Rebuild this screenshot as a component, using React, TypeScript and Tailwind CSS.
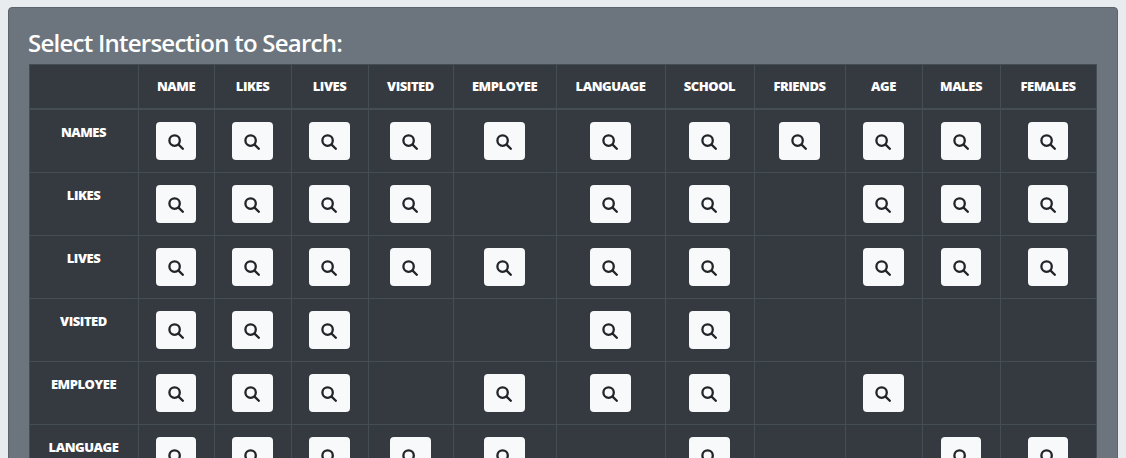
import React from "react";

const cols = ["NAME", "LIKES", "LIVES", "VISITED", "EMPLOYEE", "LANGUAGE", "SCHOOL", "FRIENDS", "AGE", "MALES", "FEMALES"];
const widths = [109, 76, 77, 77, 85, 103, 109, 89, 91, 77, 78, 96];
const rows: [string, string][] = [
  ["NAMES", "11111111111"],
  ["LIKES", "11110110111"],
  ["LIVES", "11111110111"],
  ["VISITED", "11100110000"],
  ["EMPLOYEE", "11101110100"],
  ["LANGUAGE", "11111010011"],
];

function SearchIcon() {
  return (
    <svg width="16" height="16" viewBox="0 0 16 16" fill="none" stroke="#212529" strokeWidth="2.3" className="relative top-[1px] -left-[0.5px] block">
      <circle cx="6.6" cy="6.6" r="5.2" />
      <path d="M10.6 10.6 L14.8 14.8" strokeLinecap="round" />
    </svg>
  );
}

export default function App() {
  return (
    <div className="h-[458px] overflow-hidden bg-[#e9ecef] pl-2 pr-2 pt-[7px] font-['Open_Sans','Noto_Sans',sans-serif]">
      <div className="rounded border border-[#5c646b] bg-[#6c757d] px-5 pt-[18px]">
        <h2 className="mb-[5px] -ml-[1px] h-[33px] text-[24px] leading-[33px] font-semibold tracking-[-0.75px] text-white">Select Intersection to Search:</h2>
        <table className="table-fixed border-collapse bg-[#343a40] text-white">
          <colgroup>
            {widths.map((w, i) => (
              <col key={i} style={{ width: w }} />
            ))}
          </colgroup>
          <thead>
            <tr>
              <th className="h-[44px] border border-b-2 border-[#454d55]" />
              {cols.map((c) => (
                <th key={c} className="border border-b-2 border-[#454d55] pr-[1px] text-center align-middle text-[13px] font-extrabold tracking-[-0.45px]">
                  {c}
                </th>
              ))}
            </tr>
          </thead>
          <tbody>
            {rows.map(([label, mask], r) => (
              <tr key={label}>
                <th className={`${r === 0 ? "h-[64px]" : "h-[63px]"} border border-[#454d55] px-2 pt-[12px] pr-[9px] align-top text-[13px] leading-[20px] font-extrabold tracking-[-0.45px]`}>{label}</th>
                {mask.split("").map((m, i) => (
                  <td key={i} className="border border-[#454d55] pt-[12px] pr-[1px] align-top">
                    {m === "1" && (
                      <button className="mx-auto flex h-[38px] w-[40.5px] items-center justify-center rounded bg-[#f8f9fa]">
                        <SearchIcon />
                      </button>
                    )}
                  </td>
                ))}
              </tr>
            ))}
          </tbody>
        </table>
      </div>
    </div>
  );
}
